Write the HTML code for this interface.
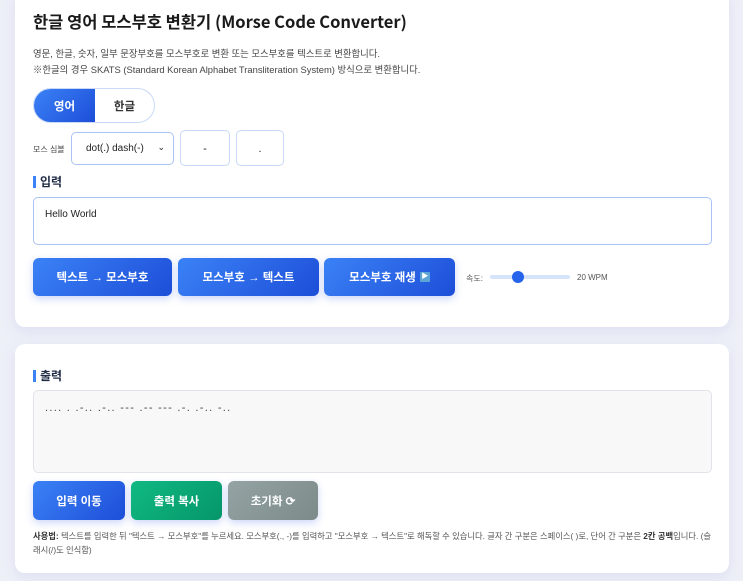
<!DOCTYPE html>
<html><head><meta charset="utf-8"><style>
*{box-sizing:border-box;margin:0;padding:0}
body{width:743px;height:581px;background:#eef0f8;font-family:"Liberation Sans","Noto Sans CJK KR",sans-serif;position:relative;overflow:hidden;color:#222}
.card{position:absolute;left:15px;width:714px;background:#fff;border-radius:10px;box-shadow:0 4px 14px rgba(120,130,200,.15)}
.abs{position:absolute}
.btn{position:absolute;border-radius:6px;color:#fff;font-weight:bold;font-size:11.5px;display:flex;align-items:center;justify-content:center;box-shadow:0 3px 8px rgba(60,100,230,.25)}
.blue{background:linear-gradient(135deg,#3b82f6,#1d4ed8)}
.lbl{position:absolute;font-weight:bold;font-size:12px;color:#1f2a44;border-left:3px solid #3b82f6;padding-left:4px;line-height:12px}
.box{position:absolute;border:1px solid #c9d9f7;border-radius:5px;background:#fff}
</style></head><body>
<div class="card" style="top:-10px;height:337px"></div>
<div class="card" style="top:344px;height:229px"></div>

<div class="abs" style="left:33px;top:9px;font-size:16.5px;font-weight:bold;color:#1a1a1a;font-family:'Noto Sans CJK KR',sans-serif">한글 영어 모스부호 변환기 (Morse Code Converter)</div>
<div class="abs" style="left:33px;top:46px;font-size:9.4px;color:#444;line-height:16px">영문, 한글, 숫자, 일부 문장부호를 모스부호로 변환 또는 모스부호를 텍스트로 변환합니다.<br>※한글의 경우 SKATS (Standard Korean Alphabet Transliteration System) 방식으로 변환합니다.</div>

<div class="abs" style="left:33px;top:88px;width:122px;height:35px;border:1px solid #c9d9f7;border-radius:18px;overflow:hidden;display:flex">
<div style="width:61px;background:linear-gradient(135deg,#3b82f6,#1d4ed8);color:#fff;font-weight:bold;font-size:11.5px;display:flex;align-items:center;justify-content:center">영어</div>
<div style="flex:1;font-weight:bold;font-size:11.5px;display:flex;align-items:center;justify-content:center;color:#333">한글</div></div>

<div class="abs" style="left:33px;top:144px;font-size:8px;color:#444">모스 심볼</div>
<div class="box" style="left:71px;top:132px;width:103px;height:33px;border-color:#a9c4f4;font-size:10px;padding:10px 0 0 14px">dot(.) dash(-) <span style="position:absolute;right:8px;top:9px;font-size:9px">⌄</span></div>
<div class="box" style="left:180px;top:130px;width:50px;height:36px;text-align:center;line-height:36px;font-size:11px">-</div>
<div class="box" style="left:236px;top:130px;width:48px;height:36px;text-align:center;line-height:36px;font-size:11px">.</div>

<div class="lbl" style="left:33px;top:176px">입력</div>
<div class="box" style="left:33px;top:197px;width:679px;height:48px;border-color:#a9c4f4;font-size:10px;padding:11px 0 0 11px">Hello World</div>

<div class="btn blue" style="left:33px;top:258px;width:139px;height:38px">텍스트 → 모스부호</div>
<div class="btn blue" style="left:178px;top:258px;width:141px;height:38px">모스부호 → 텍스트</div>
<div class="btn blue" style="left:324px;top:258px;width:131px;height:38px">모스부호 재생 <span style="display:inline-block;margin-left:4px;width:10px;height:10px;background:#5ba4d4;border-radius:1px;font-size:7px;line-height:10px;text-align:center">▶</span></div>
<div class="abs" style="left:466px;top:273px;font-size:8px;color:#555">속도:</div>
<div class="abs" style="left:490px;top:275px;width:80px;height:4px;background:#d6e4fb;border-radius:2px"></div>
<div class="abs" style="left:512px;top:271px;width:12px;height:12px;background:#2563eb;border-radius:50%"></div>
<div class="abs" style="left:577px;top:273px;font-size:8px;color:#555">20 WPM</div>

<div class="lbl" style="left:33px;top:370px">출력</div>
<div class="box" style="left:33px;top:390px;width:679px;height:83px;background:#f8f8f9;border:1.5px solid #e1e3e8;font-size:11px;padding:11px 0 0 11px;letter-spacing:1.3px;color:#444">.... . .-.. .-.. --- .-- --- .-. .-.. -..</div>

<div class="btn blue" style="left:33px;top:481px;width:92px;height:39px">입력 이동</div>
<div class="btn" style="left:131px;top:481px;width:91px;height:39px;background:linear-gradient(135deg,#10b981,#059669)">출력 복사</div>
<div class="btn" style="left:228px;top:481px;width:90px;height:39px;background:linear-gradient(135deg,#94a3a3,#7d8a8a)">초기화 ⟳</div>

<div class="abs" style="left:33px;top:529px;width:684px;font-size:8.3px;color:#555;line-height:14px"><b style="color:#333">사용법:</b> 텍스트를 입력한 뒤 "텍스트 → 모스부호"를 누르세요. 모스부호(., -)를 입력하고 "모스부호 → 텍스트"로 해독할 수 있습니다. 글자 간 구분은 스페이스( )로, 단어 간 구분은 <b style="color:#333">2칸 공백</b>입니다. (슬래시(/)도 인식함)</div>
</body></html>
